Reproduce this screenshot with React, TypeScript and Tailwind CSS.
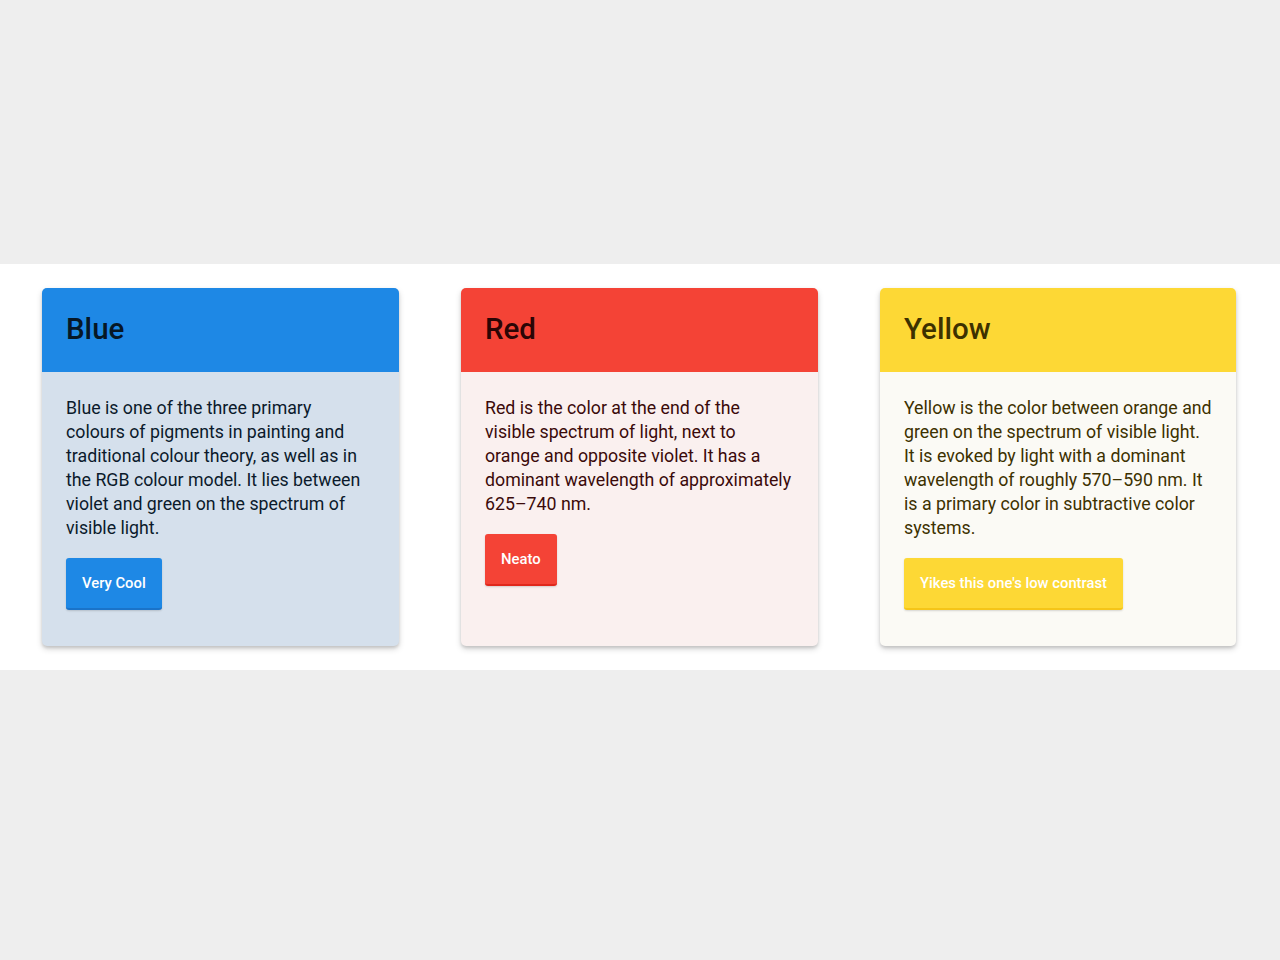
import React from 'react';

type CardProps = {
    title: string;
    body: string;
    button: string;
    head: string;
    bodyBg: string;
    text: string;
    btn: string;
    pad?: string;
};

const Card: React.FC<CardProps> = ({ title, body, button, head, bodyBg, text, btn, pad = 'pr-6' }) => (
    <div className={`rounded-[5px] overflow-hidden flex flex-col shadow-[0_3px_6px_rgba(0,0,0,0.16),0_2px_3px_rgba(0,0,0,0.12)] ${bodyBg} ${text}`}>
        <div className={`h-[84px] px-6 flex items-center ${head}`}>
            <h2 className="text-[29.5px] font-medium leading-none">{title}</h2>
        </div>
        <div className={`pl-6 pt-6 pb-9 flex-1 ${pad}`}>
            <p className="text-[17.75px] leading-6">{body}</p>
            <button className={`mt-[18px] h-[52px] px-4 rounded-[3px] text-white text-[14.8px] font-medium shadow-[0_1px_2px_rgba(0,0,0,0.15)] ${btn}`}>
                {button}
            </button>
        </div>
    </div>
);

export default function App() {
    return (
        <div className="min-h-[960px] bg-[#eeeeee] pt-[264px]" style={{ fontFamily: 'Roboto, "Liberation Sans", sans-serif' }}>
            <div className="bg-white pl-[42px] pr-[44px] py-6 grid grid-cols-[357px_357px_356px] justify-between">
                <Card
                    title="Blue"
                    body="Blue is one of the three primary colours of pigments in painting and traditional colour theory, as well as in the RGB colour model. It lies between violet and green on the spectrum of visible light."
                    button="Very Cool"
                    head="bg-[#1e88e5] text-[#061726]"
                    bodyBg="bg-[#d5e0ec]"
                    text="text-[#0b1a2b]"
                    btn="bg-[#1e88e5] border-b-2 border-[#1a73c9]"
                    pad="pr-[27px]"
                />
                <Card
                    title="Red"
                    body="Red is the color at the end of the visible spectrum of light, next to orange and opposite violet. It has a dominant wavelength of approximately 625–740 nm."
                    button="Neato"
                    head="bg-[#f44336] text-[#2b0505]"
                    bodyBg="bg-[#faf0ef]"
                    text="text-[#3a0a0a]"
                    btn="bg-[#f44336] border-b-2 border-[#e0281c]"
                />
                <Card
                    title="Yellow"
                    body="Yellow is the color between orange and green on the spectrum of visible light. It is evoked by light with a dominant wavelength of roughly 570–590 nm. It is a primary color in subtractive color systems."
                    button="Yikes this one's low contrast"
                    head="bg-[#fdd835] text-[#3d3100]"
                    bodyBg="bg-[#fbfaf5]"
                    text="text-[#3d3100]"
                    btn="bg-[#fdd835] border-b-2 border-[#f5c518]"
                />
            </div>
        </div>
    );
}
